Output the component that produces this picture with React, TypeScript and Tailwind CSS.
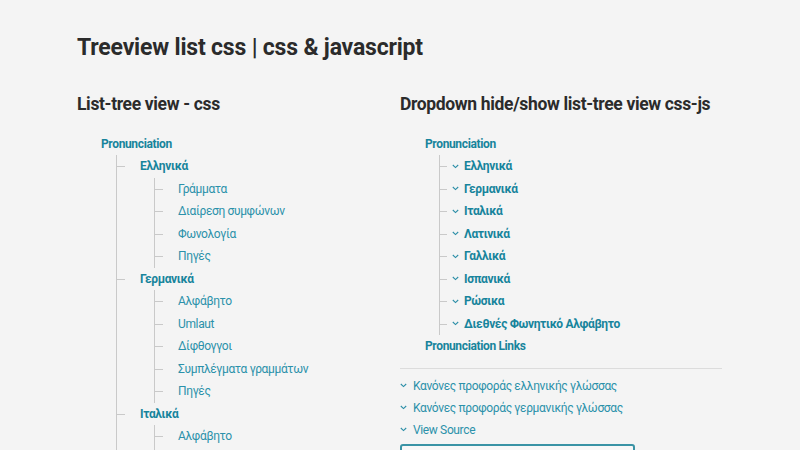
import React from "react";

const font = { fontFamily: "Roboto, 'Noto Sans', sans-serif" };

type Node = { label: string; children?: string[] };

const leftTree: Node[] = [
  { label: "Ελληνικά", children: ["Γράμματα", "Διαίρεση συμφώνων", "Φωνολογία", "Πηγές"] },
  { label: "Γερμανικά", children: ["Αλφάβητο", "Umlaut", "Δίφθογγοι", "Συμπλέγματα γραμμάτων", "Πηγές"] },
  { label: "Ιταλικά", children: ["Αλφάβητο", "Φωνήεντα", "Σύμφωνα", "Πηγές"] },
];

const rightTree = [
  "Ελληνικά",
  "Γερμανικά",
  "Ιταλικά",
  "Λατινικά",
  "Γαλλικά",
  "Ισπανικά",
  "Ρώσικα",
  "Διεθνές Φωνητικό Αλφάβητο",
];

const links = [
  "Κανόνες προφοράς ελληνικής γλώσσας",
  "Κανόνες προφοράς γερμανικής γλώσσας",
  "View Source",
];

function Chevron() {
  return (
    <svg width="7" height="5" viewBox="0 0 7 5" className="shrink-0" fill="none">
      <path d="M0.8 1l2.7 2.6L6.2 1" stroke="#2b8ea7" strokeWidth="1.1" />
    </svg>
  );
}

function Tick() {
  return <span className="absolute -left-[23px] top-[11px] h-px w-[8px] bg-[#c9c9c9]" />;
}

export default function App() {
  return (
    <div className="h-[450px] overflow-hidden bg-[#f4f4f4] text-[#2b2b2b]" style={font}>
      <div className="ml-[77px] w-[645px] pt-[34px]">
        <h1 className="text-[23px] font-bold leading-[1.2] tracking-[-0.008em]">
          Treeview list css | css &amp; javascript
        </h1>

        <div className="mt-[32px] grid grid-cols-[323px_322px]">
          {/* Left column */}
          <div>
            <h2 className="text-[17.5px] font-bold leading-[21px] tracking-[-0.02em]">List-tree view - css</h2>
            <ul className="mt-[18px] pl-[24px] text-[12px] leading-[22.5px] tracking-[-0.03em]">
              <li>
                <span className="font-bold text-[#17849c]">Pronunciation</span>
                <ul className="ml-[15px] border-l border-[#c9c9c9] pl-[23px]">
                  {leftTree.map((n) => (
                    <li key={n.label} className="relative">
                      <Tick />
                      <span className="font-bold text-[#17849c]">{n.label}</span>
                      <ul className="ml-[14px] border-l border-[#c9c9c9] pl-[23px]">
                        {n.children?.map((c, i) => (
                          <li key={i} className="relative text-[#2b91aa]">
                            <Tick />
                            {c}
                          </li>
                        ))}
                      </ul>
                    </li>
                  ))}
                </ul>
              </li>
            </ul>
          </div>

          {/* Right column */}
          <div>
            <h2 className="text-[17.5px] font-bold leading-[21px] tracking-[-0.02em]">
              Dropdown hide/show list-tree view css-js
            </h2>
            <ul className="mt-[18px] pl-[25px] text-[12px] leading-[22.5px] tracking-[-0.03em]">
              <li>
                <span className="font-bold text-[#17849c]">Pronunciation</span>
                <ul className="ml-[14px] border-l border-[#c9c9c9] pl-[12px]">
                  {rightTree.map((t) => (
                    <li key={t} className="relative flex items-center gap-[5px] font-bold text-[#17849c]">
                      <span className="absolute -left-[12px] top-[11px] h-px w-[7px] bg-[#c9c9c9]" />
                      <Chevron />
                      {t}
                    </li>
                  ))}
                </ul>
              </li>
              <li className="font-bold text-[#17849c]">Pronunciation Links</li>
            </ul>

            <div className="mt-[10px] h-px w-full bg-[#dcdcdc]" />

            <ul className="mt-[6px] text-[12px] leading-[22px] tracking-[-0.03em] text-[#2b91aa]">
              {links.map((l) => (
                <li key={l} className="flex items-center gap-[6px]">
                  <Chevron />
                  {l}
                </li>
              ))}
            </ul>

            <div className="mt-[3px] h-[60px] w-[235px] rounded-[3px] border-2 border-[#3a93a5] bg-[#f7f7f7]" />
          </div>
        </div>
      </div>
    </div>
  );
}
